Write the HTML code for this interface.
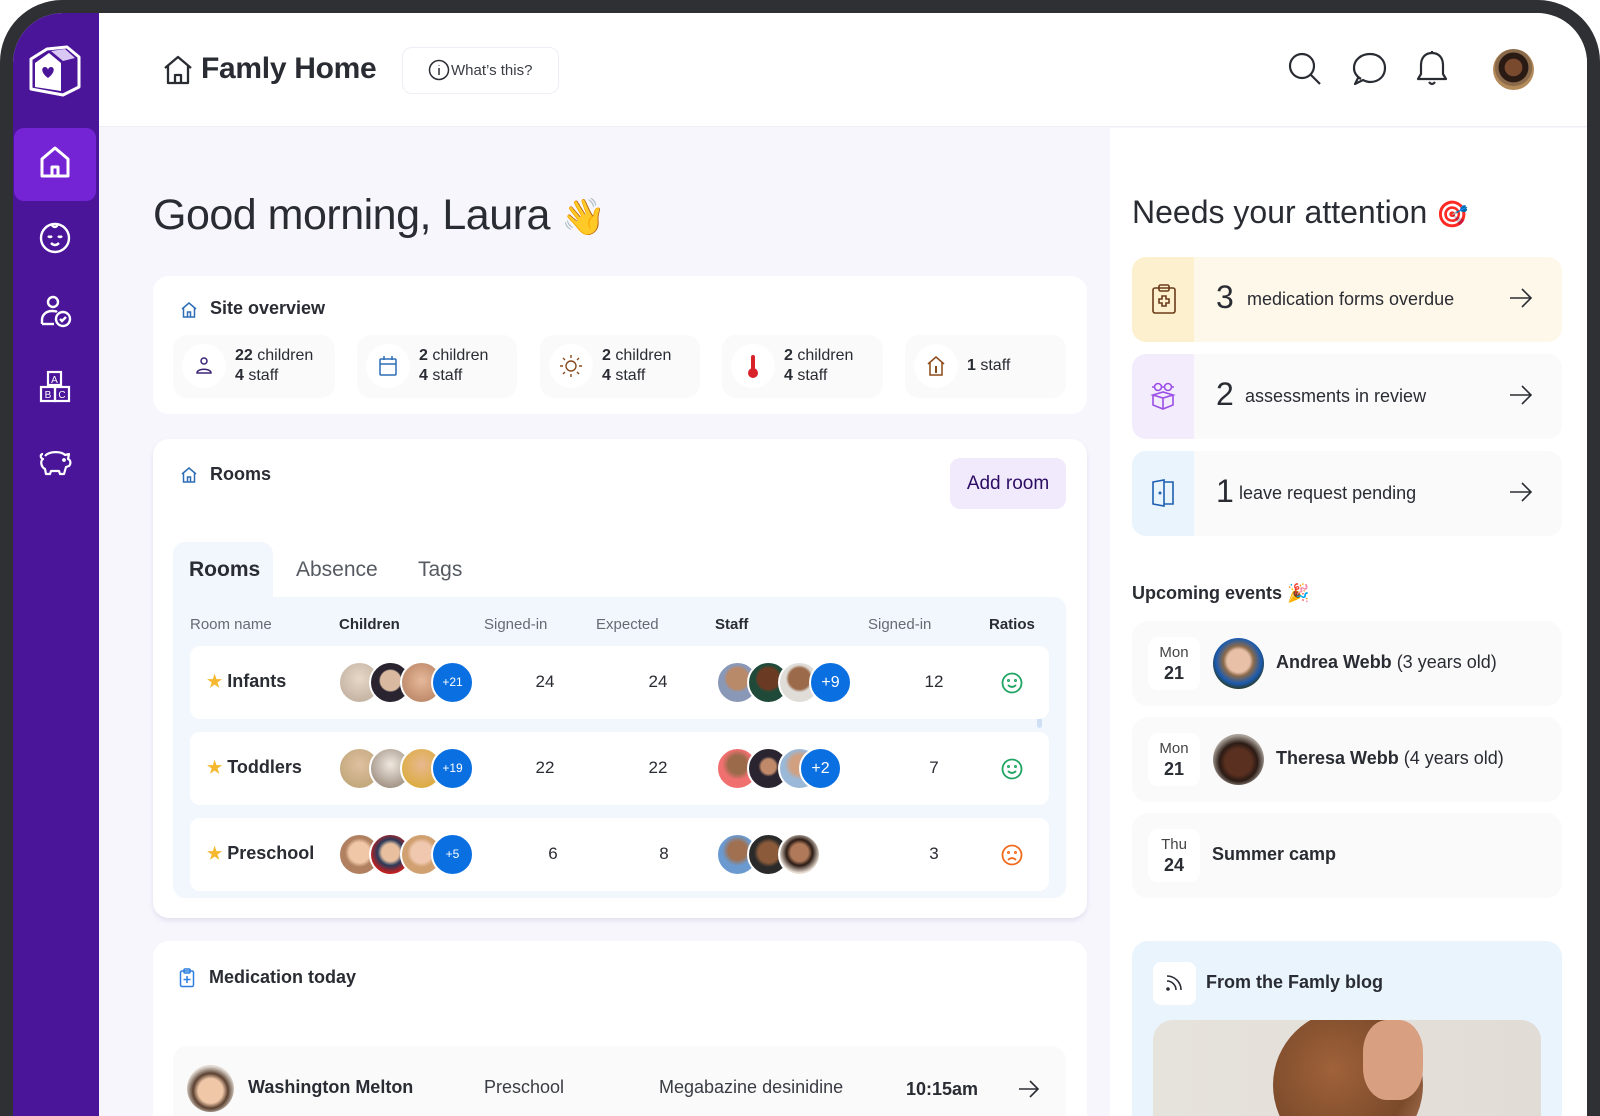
<!DOCTYPE html>
<html><head><meta charset="utf-8">
<style>
*{box-sizing:border-box;margin:0;padding:0}
body{width:1600px;height:1116px;overflow:hidden;background:#fff;font-family:"Liberation Sans",Arial,sans-serif;color:#2a2c33;position:relative}
.abs{position:absolute}
#frame{left:0;top:0;width:1600px;height:1116px;background:#2e3034;border-radius:62px 62px 0 0}
#screen{left:13px;top:13px;width:1574px;height:1103px;background:#f8f6fd;border-radius:50px 50px 0 0;overflow:hidden}
#side{left:0;top:0;width:86px;height:1103px;background:#4b159a}
#header{left:86px;top:0;width:1488px;height:114px;background:#fff;border-bottom:1px solid #efedf5}
.card{position:absolute;background:#fff;border-radius:16px}
.chip{position:absolute;top:59px;height:63px;background:#fafafa;border-radius:14px}
.chip .ic{position:absolute;left:9px;top:9px;width:44px;height:44px;border-radius:50%;background:#fff}
.chip .t{position:absolute;left:62px;top:11px;font-size:16px;line-height:20px;color:#2a2c33}
.chip b{font-weight:600}
.th{position:absolute;top:19px;font-size:15px;color:#666a72}
.th.b{color:#2a2c33;font-weight:bold}
.row{position:absolute;left:17px;width:859px;height:73px;background:#fff;border-radius:10px}
.row .nm{position:absolute;left:17px;top:25px;font-size:18px;font-weight:bold;color:#2a2c33}
.row .nm span{color:#f5b82e;font-size:17px;margin-right:5px}
.row .n{position:absolute;top:26px;font-size:17px;color:#2a2c33;width:40px;text-align:center}
.av{position:absolute;top:15px;width:43px;height:43px;border-radius:50%;border:2px solid #fff}
.cnt{background:#0a6fe0;color:#fff;font-size:12px;text-align:center;line-height:39px}
.att{position:absolute;left:1119px;width:430px;height:85px;border-radius:14px;overflow:hidden;background:#fafafa}
.att .ia{position:absolute;left:0;top:0;width:62px;height:85px}
.att .num{position:absolute;left:84px;top:22px;font-size:32px;color:#2a2c33}
.att .tx{position:absolute;top:32px;font-size:18px;color:#2a2c33}
.att .ar{position:absolute;left:377px;top:30px}
.ev{position:absolute;left:1119px;width:430px;height:85px;border-radius:16px;background:#fafafa}
.ev .d{position:absolute;left:16px;top:16px;width:52px;height:53px;background:#fff;border-radius:10px;text-align:center;font-size:15px;line-height:20px;padding-top:6px;color:#444}
.ev .d b{font-size:18px;color:#2a2c33}
.ev .p{position:absolute;left:81px;top:17px;width:51px;height:51px;border-radius:50%}
.ev .nm{position:absolute;top:31px;font-size:18px;color:#2a2c33}
</style></head><body>
<div id="frame" class="abs"></div>
<div id="screen" class="abs">
  <div id="side" class="abs">
    <svg class="abs" style="left:14px;top:32px" width="56" height="52" viewBox="0 0 56 52"><path d="M4 14 L20 4 L40 2 L52 12 L52 42 L36 50 L4 44 Z" fill="none" stroke="#fff" stroke-width="3" stroke-linejoin="round"/><path d="M8 18 L22 8 L34 18 L34 46 L8 42 Z" fill="#fff"/><path d="M24 6 L38 4 L48 13 L36 16 Z" fill="#d9c8f3"/><path d="M21 33 C14 28 14 22 18 22 C20 22 21 24 21 25 C21 24 22 22 24 22 C28 22 28 28 21 33Z" fill="#4b159a"/></svg>
    <div class="abs" style="left:1px;top:115px;width:82px;height:73px;background:#7424d4;border-radius:10px"></div>
    <svg class="abs" style="left:26px;top:132px" width="32" height="34" viewBox="0 0 32 34" fill="none" stroke="#fff" stroke-width="3" stroke-linejoin="round"><path d="M3 14 L16 3 L29 14 V31 H3 Z"/><path d="M13 31 V22 H19 V31" /></svg>
    <svg class="abs" style="left:25px;top:207px" width="34" height="34" viewBox="0 0 34 34" fill="none" stroke="#fff" stroke-width="2.4"><circle cx="17" cy="18" r="14"/><path d="M14 4 c0 4 6 4 5 0"/><path d="M10 16 q2 2 4 0 M20 16 q2 2 4 0"/><path d="M13 23 q4 4 8 0"/></svg>
    <svg class="abs" style="left:26px;top:281px" width="34" height="34" viewBox="0 0 34 34" fill="none" stroke="#fff" stroke-width="2.4"><circle cx="14" cy="8" r="5"/><path d="M3 30 v-4 c0-5 4-9 10-9 c2 0 4 0 5 1"/><path d="M3 30 h12"/><circle cx="24" cy="25" r="7"/><path d="M21 25 l2 2 l4-4"/></svg>
    <svg class="abs" style="left:26px;top:357px" width="32" height="34" viewBox="0 0 32 34" fill="none" stroke="#fff" stroke-width="2.2"><rect x="9" y="2" width="13" height="13"/><rect x="2" y="17" width="14" height="14"/><rect x="16" y="17" width="14" height="14"/><text x="15.5" y="13" font-size="10" fill="#fff" stroke="none" text-anchor="middle" font-family="Liberation Sans">A</text><text x="9" y="28" font-size="10" fill="#fff" stroke="none" text-anchor="middle" font-family="Liberation Sans">B</text><text x="23" y="28" font-size="10" fill="#fff" stroke="none" text-anchor="middle" font-family="Liberation Sans">C</text></svg>
    <svg class="abs" style="left:24px;top:435px" width="36" height="30" viewBox="0 0 36 30" fill="none" stroke="#fff" stroke-width="2.2" stroke-linejoin="round"><path d="M8 8 C12 3 24 3 28 7 L32 6 L31 11 C34 12 34 16 32 18 L29 19 L27 26 H23 L22 23 H14 L13 26 H9 L8 21 C4 19 3 13 6 11 C3 10 3 6 6 6"/><circle cx="27" cy="12" r="0.8" fill="#fff"/></svg>
  </div>
  <div id="header" class="abs">
    <svg class="abs" style="left:63px;top:41px" width="32" height="32" viewBox="0 0 32 32" fill="none" stroke="#2a2c33" stroke-width="2.3" stroke-linejoin="round"><path d="M3 14 L16 3 L29 14 M6 12 V29 H26 V12"/><path d="M13 29 V21 H19 V29"/></svg>
    <div class="abs" style="left:102px;top:39px;font-size:30px;font-weight:600;color:#2a2c33;letter-spacing:-0.3px">Famly Home</div>
    <div class="abs" style="left:303px;top:34px;width:157px;height:47px;border:1px solid #efedf5;border-radius:10px;font-size:15px;color:#3a3c44;line-height:45px;padding-left:48px">What’s this?</div>
    <svg class="abs" style="left:329px;top:46px" width="22" height="22" viewBox="0 0 22 22" fill="none" stroke="#2a2c33" stroke-width="1.5"><circle cx="11" cy="11" r="9.5"/><path d="M11 9 V16 M11 6 v0.5"/></svg>
    <svg class="abs" style="left:1188px;top:38px" width="36" height="36" viewBox="0 0 36 36" fill="none" stroke="#2a2c33" stroke-width="2.2"><circle cx="15" cy="15" r="12"/><path d="M24 24 L33 33"/></svg>
    <svg class="abs" style="left:1253px;top:38px" width="36" height="36" viewBox="0 0 36 36" fill="none" stroke="#2a2c33" stroke-width="2.2" stroke-linejoin="round"><path d="M9 28 C4 25 2 21 2 17 C2 9 9 3 18 3 C27 3 33 9 33 17 C33 25 27 31 18 31 C15 31 13 30 11 29 L3 33 L6 27"/></svg>
    <svg class="abs" style="left:1316px;top:37px" width="34" height="38" viewBox="0 0 34 38" fill="none" stroke="#2a2c33" stroke-width="2.2" stroke-linejoin="round"><path d="M17 3 C10 3 6 8 6 15 V24 L3 29 H31 L28 24 V15 C28 8 24 3 17 3Z"/><path d="M14 32 q3 4 6 0"/><path d="M17 1 v2"/></svg>
    <div class="abs" style="left:1394px;top:36px;width:41px;height:41px;border-radius:50%;background:radial-gradient(circle at 50% 45%,#7a4a2f 0 28%,#2a1a14 30% 48%,#8a6a4a 50% 60%,#b38a5a 62%)"></div>
  </div>

  <div class="abs" style="left:1097px;top:115px;width:477px;height:988px;background:#fff"></div>

  <div class="abs" style="left:140px;top:178px;font-size:43px;color:#2a2c33;letter-spacing:-0.5px">Good morning, Laura <span style="font-size:36px">👋</span></div>

  <div class="card" style="left:140px;top:263px;width:934px;height:138px">
    <svg class="abs" style="left:27px;top:25px" width="18" height="18" viewBox="0 0 18 18" fill="none" stroke="#2c6db5" stroke-width="1.5"><path d="M2 8 L9 2 L16 8 M3.5 7 V16 H14.5 V7 M7.5 16 V11 H10.5 V16"/></svg>
    <div class="abs" style="left:57px;top:22px;font-size:18px;font-weight:bold">Site overview</div>
    <div class="chip" style="left:20px;width:162px"><div class="ic"></div>
      <svg class="abs" style="left:21px;top:21px" width="20" height="20" viewBox="0 0 20 20" fill="none" stroke="#3b2378" stroke-width="1.5"><circle cx="10" cy="5" r="3"/><path d="M3 17 c0-5 14-5 14 0 Z"/></svg>
      <div class="t"><b>22</b> children<br><b>4</b> staff</div></div>
    <div class="chip" style="left:204px;width:160px"><div class="ic"></div>
      <svg class="abs" style="left:22px;top:20px" width="18" height="22" viewBox="0 0 18 22" fill="none" stroke="#2c6db5" stroke-width="1.5"><rect x="1" y="4" width="16" height="16" rx="1"/><path d="M1 9 H17 M5 1 V5 M13 1 V5"/></svg>
      <div class="t"><b>2</b> children<br><b>4</b> staff</div></div>
    <div class="chip" style="left:387px;width:160px"><div class="ic"></div>
      <svg class="abs" style="left:19px;top:19px" width="24" height="24" viewBox="0 0 24 24" fill="none" stroke="#8a4a1c" stroke-width="1.4"><circle cx="12" cy="12" r="5"/><path d="M12 1v3M12 20v3M1 12h3M20 12h3M4 4l2 2M18 18l2 2M4 20l2-2M18 6l2-2"/></svg>
      <div class="t"><b>2</b> children<br><b>4</b> staff</div></div>
    <div class="chip" style="left:569px;width:161px"><div class="ic"></div>
      <svg class="abs" style="left:25px;top:19px" width="12" height="26" viewBox="0 0 12 26"><rect x="4" y="1" width="4" height="16" rx="2" fill="#d8222a"/><circle cx="6" cy="19" r="5" fill="#d8222a"/></svg>
      <div class="t"><b>2</b> children<br><b>4</b> staff</div></div>
    <div class="chip" style="left:752px;width:161px"><div class="ic"></div>
      <svg class="abs" style="left:21px;top:20px" width="20" height="22" viewBox="0 0 20 22" fill="none" stroke="#8a4a1c" stroke-width="1.5"><path d="M2 9 L10 2 L18 9 M4 8 V20 H16 V8"/><rect x="9" y="11" width="2" height="7" fill="#8a4a1c" stroke="none"/></svg>
      <div class="t" style="top:21px"><b>1</b> staff</div></div>
  </div>

  <div class="card" style="left:140px;top:426px;width:934px;height:479px;box-shadow:0 3px 6px rgba(80,70,120,0.12)">
    <svg class="abs" style="left:27px;top:27px" width="18" height="18" viewBox="0 0 18 18" fill="none" stroke="#2c6db5" stroke-width="1.5"><path d="M2 8 L9 2 L16 8 M3.5 7 V16 H14.5 V7 M7.5 16 V11 H10.5 V16"/></svg>
    <div class="abs" style="left:57px;top:25px;font-size:18px;font-weight:bold">Rooms</div>
    <div class="abs" style="left:797px;top:19px;width:116px;height:51px;background:#f1e9fc;border-radius:10px;color:#2c0d63;font-size:19px;text-align:center;line-height:51px">Add room</div>
    <div class="abs" style="left:20px;top:103px;width:100px;height:60px;background:#f2f7fd;border-radius:12px 12px 0 0"></div>
    <div class="abs" style="left:36px;top:119px;font-size:21px;font-weight:bold">Rooms</div>
    <div class="abs" style="left:143px;top:119px;font-size:21px;color:#555a62">Absence</div>
    <div class="abs" style="left:265px;top:119px;font-size:21px;color:#555a62">Tags</div>
    <div class="abs" style="left:20px;top:158px;width:893px;height:301px;background:#f2f7fd;border-radius:0 12px 12px 12px">
      <div class="th" style="left:17px">Room name</div>
      <div class="th b" style="left:166px">Children</div>
      <div class="th" style="left:311px">Signed-in</div>
      <div class="th" style="left:423px">Expected</div>
      <div class="th b" style="left:542px">Staff</div>
      <div class="th" style="left:695px">Signed-in</div>
      <div class="th b" style="left:816px">Ratios</div>
      <div class="abs" style="left:864px;top:51px;width:5px;height:80px;background:#cfe0f5;border-radius:3px"></div>

      <div class="row" style="top:49px">
        <div class="nm"><span>★</span>Infants</div>
        <div class="av" style="left:148px;background:radial-gradient(circle at 50% 40%,#e8d8c8,#b9a898)"></div>
        <div class="av" style="left:179px;background:radial-gradient(circle at 50% 45%,#d9b9a0 0 35%,#2a2430 40%)"></div>
        <div class="av" style="left:210px;background:radial-gradient(circle at 50% 45%,#e6b89a,#b07a5a)"></div>
        <div class="av cnt" style="left:241px">+21</div>
        <div class="n" style="left:335px">24</div><div class="n" style="left:448px">24</div>
        <div class="av" style="left:526px;background:radial-gradient(circle at 50% 40%,#b88a6a 0 35%,#8a98b8 45%)"></div>
        <div class="av" style="left:557px;background:radial-gradient(circle at 50% 40%,#6a3a22 0 35%,#1f4a3a 45%)"></div>
        <div class="av" style="left:588px;background:radial-gradient(circle at 50% 40%,#9a6a4a 0 35%,#e0ddd8 45%)"></div>
        <div class="av cnt" style="left:619px;font-size:16px">+9</div>
        <div class="n" style="left:724px">12</div>
        <svg class="abs" style="left:811px;top:26px" width="22" height="22" viewBox="0 0 22 22" fill="none" stroke="#1fa463" stroke-width="1.8"><circle cx="11" cy="11" r="9.5"/><path d="M7 13 q4 4 8 0"/><circle cx="7.5" cy="8.5" r="0.6"/><circle cx="14.5" cy="8.5" r="0.6"/></svg>
      </div>
      <div class="row" style="top:135px">
        <div class="nm"><span>★</span>Toddlers</div>
        <div class="av" style="left:148px;background:radial-gradient(circle at 50% 40%,#e0c0a0,#b8a070)"></div>
        <div class="av" style="left:179px;background:radial-gradient(circle at 50% 40%,#f0e8e0,#8a7a6a)"></div>
        <div class="av" style="left:210px;background:radial-gradient(circle at 50% 40%,#e8b890,#d8a828)"></div>
        <div class="av cnt" style="left:241px">+19</div>
        <div class="n" style="left:335px">22</div><div class="n" style="left:448px">22</div>
        <div class="av" style="left:526px;background:radial-gradient(circle at 50% 40%,#9a6a4a 0 30%,#f07070 50%)"></div>
        <div class="av" style="left:557px;background:radial-gradient(circle at 50% 45%,#c08a6a 0 25%,#2a2430 35%)"></div>
        <div class="av" style="left:588px;background:radial-gradient(circle at 50% 40%,#d0a080 0 30%,#9ab8d8 50%)"></div>
        <div class="av cnt" style="left:609px;font-size:16px">+2</div>
        <div class="n" style="left:724px">7</div>
        <svg class="abs" style="left:811px;top:26px" width="22" height="22" viewBox="0 0 22 22" fill="none" stroke="#1fa463" stroke-width="1.8"><circle cx="11" cy="11" r="9.5"/><path d="M7 13 q4 4 8 0"/><circle cx="7.5" cy="8.5" r="0.6"/><circle cx="14.5" cy="8.5" r="0.6"/></svg>
      </div>
      <div class="row" style="top:221px">
        <div class="nm"><span>★</span>Preschool</div>
        <div class="av" style="left:148px;background:radial-gradient(circle at 50% 45%,#f0c8a8 0 35%,#b08060 50%)"></div>
        <div class="av" style="left:179px;background:radial-gradient(circle at 50% 45%,#e8c0a0 0 30%,#2a3a5a 45%,#c02020 70%)"></div>
        <div class="av" style="left:210px;background:radial-gradient(circle at 50% 45%,#f0c8b0 0 35%,#d0a070 50%)"></div>
        <div class="av cnt" style="left:241px">+5</div>
        <div class="n" style="left:343px">6</div><div class="n" style="left:454px">8</div>
        <div class="av" style="left:526px;background:radial-gradient(circle at 50% 40%,#a07050 0 30%,#6a9ad0 50%)"></div>
        <div class="av" style="left:557px;background:radial-gradient(circle at 50% 45%,#8a5a3a 0 35%,#2a2a2a 50%)"></div>
        <div class="av" style="left:588px;background:radial-gradient(circle at 50% 45%,#b07a5a 0 30%,#2a1a14 45%,#e8dcd0 70%)"></div>
        <div class="n" style="left:724px">3</div>
        <svg class="abs" style="left:811px;top:26px" width="22" height="22" viewBox="0 0 22 22" fill="none" stroke="#f26a1b" stroke-width="1.8"><circle cx="11" cy="11" r="9.5"/><path d="M7 16 q4 -4 8 0"/><circle cx="7.5" cy="8.5" r="0.6"/><circle cx="14.5" cy="8.5" r="0.6"/></svg>
      </div>
    </div>
  </div>

  <div class="card" style="left:140px;top:928px;width:934px;height:200px">
    <svg class="abs" style="left:26px;top:27px" width="16" height="20" viewBox="0 0 16 20" fill="none" stroke="#2c7fe0" stroke-width="1.5"><rect x="1.5" y="3" width="13" height="15.5" rx="1.5"/><rect x="5" y="1" width="6" height="4" rx="1"/><path d="M8 8 v7 M4.5 11.5 h7"/></svg>
    <div class="abs" style="left:56px;top:26px;font-size:18px;font-weight:bold">Medication today</div>
    <div class="abs" style="left:20px;top:105px;width:893px;height:100px;background:#fafafa;border-radius:14px">
      <div class="abs" style="left:14px;top:19px;width:47px;height:47px;border-radius:50%;background:radial-gradient(circle at 50% 55%,#f0c8a8 0 35%,#5a4030 50%,#e0d8d0 70%)"></div>
      <div class="abs" style="left:75px;top:31px;font-size:18px;font-weight:bold">Washington Melton</div>
      <div class="abs" style="left:311px;top:31px;font-size:18px;color:#3a3c44">Preschool</div>
      <div class="abs" style="left:486px;top:31px;font-size:18px;color:#3a3c44">Megabazine desinidine</div>
      <div class="abs" style="left:733px;top:33px;font-size:18px;font-weight:bold">10:15am</div>
      <svg class="abs" style="left:845px;top:33px" width="22" height="20" viewBox="0 0 22 20" fill="none" stroke="#2a2c33" stroke-width="1.6"><path d="M1 10 H20 M12 2 L20 10 L12 18"/></svg>
    </div>
  </div>

  <div class="abs" style="left:1119px;top:181px;font-size:32px;color:#2a2c33">Needs your attention <span style="font-size:26px">🎯</span></div>

  <div class="att" style="top:244px;background:#fef8ea"><div class="ia" style="background:#fdf0cf"></div>
    <svg class="abs" style="left:19px;top:26px" width="26" height="32" viewBox="0 0 26 32" fill="none" stroke="#6a3a1a" stroke-width="1.6"><rect x="2" y="5" width="22" height="25" rx="2"/><rect x="8" y="2" width="10" height="6" rx="1.5"/><path d="M11 13 h4 v3 h3 v4 h-3 v3 h-4 v-3 h-3 v-4 h3z"/></svg>
    <div class="num">3</div><div class="tx" style="left:115px">medication forms overdue</div>
    <svg class="ar" width="24" height="22" viewBox="0 0 24 22" fill="none" stroke="#2a2c33" stroke-width="1.6"><path d="M1 11 H22 M13 2 L22 11 L13 20"/></svg></div>
  <div class="att" style="top:341px"><div class="ia" style="background:#f3ecfd"></div>
    <svg class="abs" style="left:18px;top:28px" width="26" height="28" viewBox="0 0 26 28" fill="none" stroke="#9b4ee6" stroke-width="1.6"><circle cx="8" cy="5" r="3.5"/><circle cx="18" cy="5" r="3.5"/><path d="M11.5 5 h3 M4 5 h-2 M22 5 h2"/><path d="M3 13 L13 10 L23 13 L13 16 Z M3 13 V23 L13 27 L23 23 V13 M13 16 V27"/></svg>
    <div class="num">2</div><div class="tx" style="left:113px">assessments in review</div>
    <svg class="ar" width="24" height="22" viewBox="0 0 24 22" fill="none" stroke="#2a2c33" stroke-width="1.6"><path d="M1 11 H22 M13 2 L22 11 L13 20"/></svg></div>
  <div class="att" style="top:438px"><div class="ia" style="background:#eaf4fd"></div>
    <svg class="abs" style="left:19px;top:28px" width="24" height="28" viewBox="0 0 24 28" fill="none" stroke="#1d5fb0" stroke-width="1.6"><path d="M2 3 L13 1 V27 L2 25 Z M13 3 H22 V25 H13"/><circle cx="9" cy="14" r="0.7"/></svg>
    <div class="num">1</div><div class="tx" style="left:107px">leave request pending</div>
    <svg class="ar" width="24" height="22" viewBox="0 0 24 22" fill="none" stroke="#2a2c33" stroke-width="1.6"><path d="M1 11 H22 M13 2 L22 11 L13 20"/></svg></div>

  <div class="abs" style="left:1119px;top:570px;font-size:18px;font-weight:bold">Upcoming events <span style="font-size:18px">🎉</span></div>
  <div class="ev" style="top:608px"><div class="d">Mon<br><b>21</b></div>
    <div class="p" style="background:radial-gradient(circle at 50% 45%,#e8c0a8 0 30%,#8a6a4a 40%,#1a5ab0 60%,#2a3a20 75%)"></div>
    <div class="nm" style="left:144px"><b>Andrea Webb</b> (3 years old)</div></div>
  <div class="ev" style="top:704px"><div class="d">Mon<br><b>21</b></div>
    <div class="p" style="background:radial-gradient(circle at 50% 55%,#5a3020 0 35%,#2a1a14 50%,#a8a098 70%)"></div>
    <div class="nm" style="left:144px"><b>Theresa Webb</b> (4 years old)</div></div>
  <div class="ev" style="top:800px"><div class="d">Thu<br><b>24</b></div>
    <div class="nm" style="left:80px"><b>Summer camp</b></div></div>

  <div class="abs" style="left:1119px;top:928px;width:430px;height:200px;background:#eaf4fd;border-radius:16px">
    <div class="abs" style="left:21px;top:21px;width:43px;height:43px;background:#fff;border-radius:8px"></div>
    <svg class="abs" style="left:33px;top:33px" width="18" height="18" viewBox="0 0 18 18" fill="none" stroke="#2a2c33" stroke-width="1.6"><path d="M2 7 a9 9 0 0 1 9 9 M2 2 a14 14 0 0 1 14 14"/><circle cx="3" cy="15" r="1" fill="#2a2c33"/></svg>
    <div class="abs" style="left:74px;top:31px;font-size:18px;font-weight:bold">From the Famly blog</div>
    <div class="abs" style="left:21px;top:79px;width:388px;height:130px;border-radius:20px;overflow:hidden;background:linear-gradient(90deg,#e6e2dc 0%,#e2dcd6 100%)">
      <div class="abs" style="left:120px;top:-10px;width:150px;height:150px;border-radius:50%;background:radial-gradient(circle at 40% 40%,#a0623a,#7a4a2a 60%,#c08a6a)"></div>
      <div class="abs" style="left:210px;top:0;width:60px;height:80px;border-radius:40%;background:#d8a080"></div>
    </div>
  </div>
</div>
</body></html>
